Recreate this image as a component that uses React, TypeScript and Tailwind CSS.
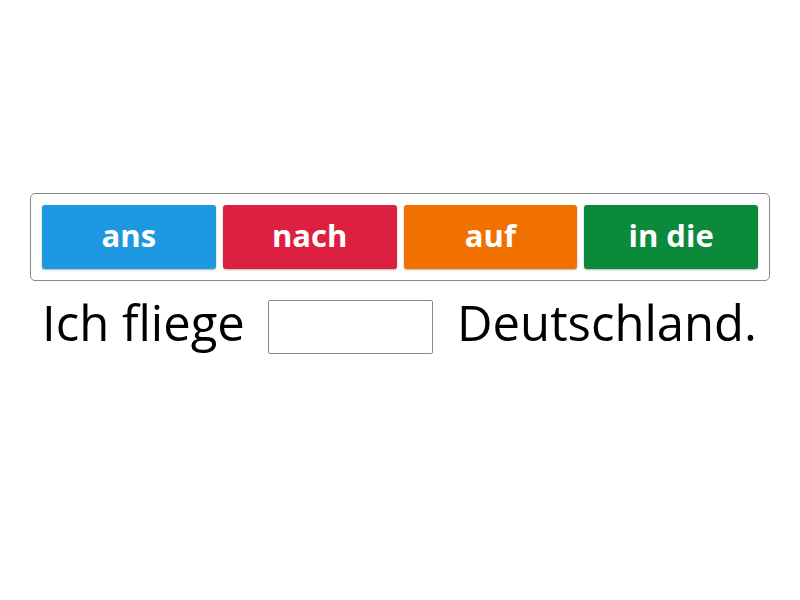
const words = [
  { label: "ans", bg: "bg-[#1e98e0]" },
  { label: "nach", bg: "bg-[#dd2040]" },
  { label: "auf", bg: "bg-[#f07100]" },
  { label: "in die", bg: "bg-[#0b8a3c]" },
];

export default function App() {
  return (
    <main
      className="flex h-[600px] w-[800px] flex-col items-center bg-white pt-[193px]"
      style={{ fontFamily: '"Open Sans", sans-serif' }}
    >
      <div className="flex w-[740px] gap-[7px] rounded-[5px] border border-[#8a8a8a] p-[11px]">
        {words.map((w) => (
          <div
            key={w.label}
            className={`flex h-[64px] flex-1 items-center justify-center rounded-[3px] pb-[4px] text-[31px] font-bold text-white shadow-[0_1px_2px_rgba(0,0,0,0.3)] ${w.bg}`}
          >
            {w.label}
          </div>
        ))}
      </div>

      <div className="mt-[17px] flex w-[740px] items-center justify-between pl-[12px] pr-[13px] text-[49px] leading-none text-black">
        <span className="pb-[9px]">Ich fliege</span>
        <span className="h-[54px] w-[165px] rounded-[2px] border border-[#8a8a8a]" />
        <span className="pb-[9px]">Deutschland.</span>
      </div>
    </main>
  );
}
